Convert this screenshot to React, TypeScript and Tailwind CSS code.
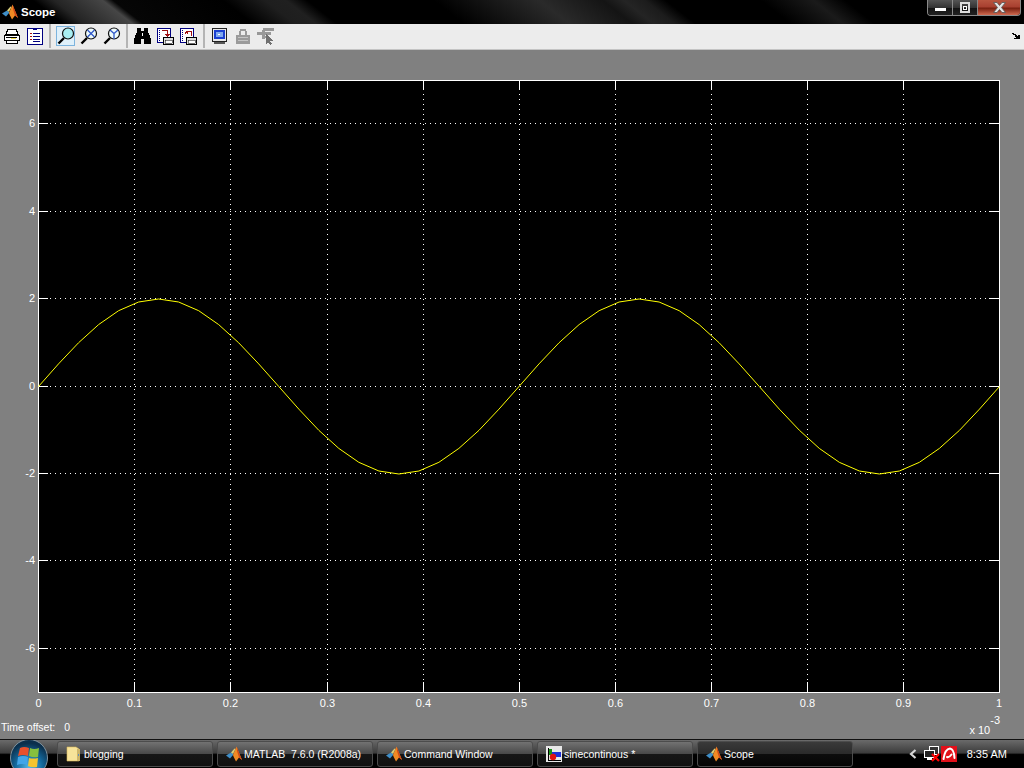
import React from 'react';

const font = { fontFamily: '"Liberation Sans", Arial, sans-serif' };

const MatlabLogo = ({ size = 16 }: { size?: number }) => (
  <svg width={size} height={size} viewBox="0 0 16 16">
    <path d="M0 9.5 L5 6.5 L7.5 8.5 L4 12.5 Z" fill="#3f8ec8" />
    <path d="M5 6.5 L7 8 L9.5 3 L8.5 2.5 Z" fill="#d8cf7a" />
    <path d="M7 9 L10.5 0.5 L16 14 L13 11.5 L10 15.5 L7.5 10.5 Z" fill="#f08a24" />
    <path d="M10.5 0.5 L16 14 L13 11.5 L11 5 Z" fill="#d0481a" />
  </svg>
);

const Printer = () => (
  <svg width="17" height="16" viewBox="0 0 17 16" shapeRendering="crispEdges">
    <path d="M5 1h8l2 5H3z" fill="#fff" stroke="#000" />
    <path d="M1 7h15v5H1z" fill="#fff" stroke="#000" />
    <path d="M3 9h11v1H3z" fill="#000" />
    <path d="M8 10h5v1H8z" fill="#f4e04d" />
    <path d="M3 12h11v3H3z" fill="#fff" stroke="#000" />
  </svg>
);

const ParamDoc = () => (
  <svg width="16" height="17" viewBox="0 0 16 17" shapeRendering="crispEdges">
    <path d="M0.5 0.5h15v16H0.5z" fill="#fff" stroke="#000080" />
    <path d="M6 0h4v2H6z" fill="#000080" />
    <path d="M3 5h2v1H3zM3 8h2v1H3zM3 11h2v1H3z" fill="#a01010" />
    <path d="M6 5h7v1H6zM6 8h7v1H6zM6 11h7v1H6zM6 13h7v1H6z" fill="#000080" />
  </svg>
);

const Magnifier = ({ kind }: { kind: 'plain' | 'x' | 'y' }) => (
  <svg width="18" height="18" viewBox="0 0 18 18">
    <line x1="1.5" y1="16.5" x2="7" y2="11" stroke="#000" strokeWidth="2.4" />
    <circle cx="11" cy="6.5" r="5.5" fill={kind === 'plain' ? '#a8eef2' : '#eefbfb'} stroke="#111" strokeWidth="1.2" />
    {kind === 'x' && <path d="M7.5 3 L14.5 10 M14.5 3 L7.5 10" stroke="#2f57c8" strokeWidth="1.3" />}
    {kind === 'y' && <path d="M11 6.5 L11 12 M11 6.5 L7 3 M11 6.5 L15 3" stroke="#2f57c8" strokeWidth="1.3" />}
  </svg>
);

const Binoculars = () => (
  <svg width="17" height="16" viewBox="0 0 17 16" shapeRendering="crispEdges">
    <path d="M3 0h4v3h3V0h4v5h1l2 7v4h-7v-5H7v5H0v-4l2-7h1z" fill="#000" />
    <path d="M8 5h1v3H8z" fill="#fff" />
  </svg>
);

const PageArrow = ({ flip }: { flip?: boolean }) => (
  <svg width="17" height="17" viewBox="0 0 17 17" shapeRendering="crispEdges">
    <path d="M0.5 0.5h13v14H0.5z" fill="#fff" stroke="#000080" />
    <path d="M2 2h1v1H2zM2 4h1v1H2zM2 6h1v1H2zM2 8h1v1H2zM2 10h1v1H2zM2 12h1v1H2z" fill="#000080" />
    {flip ? (
      <path d="M6 3h6v5h-1V4H8v2H7V5H6v1H5V4h1z" fill="#a01010" />
    ) : (
      <path d="M5 2h6v4h2v1h-1v1h-1v1h-1V8H9V7H8V6h2V3H5z" fill="#a01010" />
    )}
    <path d="M6.5 9.5h10v7h-10z" fill="#ddd" stroke="#000" />
    <path d="M8 12h7v3H8z" fill="#fff" stroke="#000" strokeWidth="0.5" />
  </svg>
);

const SimIcon = () => (
  <svg width="15" height="17" viewBox="0 0 15 17" shapeRendering="crispEdges">
    <path d="M0.5 0.5h14v13h-14z" fill="#e8e8e8" stroke="#222" />
    <path d="M2 2h11v9H2z" fill="#1a3fd0" />
    <path d="M4 4h7v5H4z" fill="#7fa8ee" />
    <path d="M6 6h2v1H6z" fill="#fff" />
    <path d="M2 14h11v2H2z" fill="#555" />
  </svg>
);

const LockIcon = () => (
  <svg width="14" height="16" viewBox="0 0 14 16" shapeRendering="crispEdges">
    <path d="M3 7V3h1V1h6v2h1v4H9V3H5v4z" fill="#9a9a9a" />
    <path d="M0 7h14v9H0z" fill="#9a9a9a" />
    <path d="M2 9h10v1H2zM2 12h10v1H2z" fill="#c4c4c4" />
  </svg>
);

const TreeArrow = () => (
  <svg width="17" height="17" viewBox="0 0 17 17" shapeRendering="crispEdges">
    <path d="M6 0h11v3H6zM0 4h14v3H0zM5 8h7v2H5zM5 2h3v9H5z" fill="#989898" />
    <path d="M9 6v10l2-2 2 3 2-1-2-3h3z" fill="#707070" />
  </svg>
);

const CornerArrow = () => (
  <svg width="8" height="6" viewBox="0 0 8 6" shapeRendering="crispEdges">
    <path d="M0 0h2v1h2v1h1v1h1V2h2v4H2V5h2V4H3V2H1V1H0z" fill="#000" />
  </svg>
);

const ToolSlot = ({ children, active }: { children: React.ReactNode; active?: boolean }) => (
  <div className="w-[23px] h-[24px] flex items-center justify-center">
    <div
      className={`w-[19px] h-[20px] flex items-center justify-center shrink-0 ${
        active ? 'bg-[#dff0fa] border border-[#7db4de]' : ''
      }`}
    >
      <span className="shrink-0 flex">{children}</span>
    </div>
  </div>
);

const ToolSep = () => (
  <div className="w-[8px] h-[24px] flex justify-center">
    <div className="w-[2px] h-full bg-[#b4b4b4]" />
  </div>
);

const xTicks = [0.1, 0.2, 0.3, 0.4, 0.5, 0.6, 0.7, 0.8, 0.9];
const xPx = [134, 230, 327, 423, 519, 615, 711, 807, 903];
const yTicks = [6, 4, 2, 0, -2, -4, -6];
const yPx = [123, 211, 298, 386, 473, 560, 648];

const sinePoints = Array.from({ length: 49 }, (_, i) => {
  const t = i / 48;
  const x = 38.5 + t * 961;
  const y = 386.5 - 87.5 * Math.sin(4 * Math.PI * t);
  return `${x.toFixed(1)},${y.toFixed(1)}`;
}).join(' ');

const ScopePlot = () => (
  <svg className="block shrink-0" width="1024" height="663" viewBox="0 50 1024 663" style={font}>
    <rect x="38.5" y="80.5" width="961" height="612" fill="#000" stroke="#fff" shapeRendering="crispEdges" />
    <g stroke="#fff" shapeRendering="crispEdges">
      {xPx.map((x) => (
        <g key={x}>
          <line x1={x + 0.5} y1="94" x2={x + 0.5} y2="680" strokeDasharray="1 4" />
          <line x1={x + 0.5} y1="80" x2={x + 0.5} y2="90" />
          <line x1={x + 0.5} y1="682" x2={x + 0.5} y2="692" />
        </g>
      ))}
      {yPx.map((y) => (
        <g key={y}>
          <line x1="50" y1={y + 0.5} x2="988" y2={y + 0.5} strokeDasharray="1 4" />
          <line x1="38" y1={y + 0.5} x2="48" y2={y + 0.5} />
          <line x1="989" y1={y + 0.5} x2="999" y2={y + 0.5} />
        </g>
      ))}
    </g>
    <polyline points={sinePoints} fill="none" stroke="#ffff00" strokeWidth="1" />
    <g fill="#fff" fontSize="11">
      {yTicks.map((v, i) => (
        <text key={v} x="35" y={yPx[i] + 4} textAnchor="end">
          {v}
        </text>
      ))}
      <text x="38.5" y="707" textAnchor="middle">0</text>
      {xTicks.map((v, i) => (
        <text key={v} x={xPx[i] + 0.5} y="707" textAnchor="middle">
          {v.toFixed(1)}
        </text>
      ))}
      <text x="999" y="707" textAnchor="middle">1</text>
    </g>
  </svg>
);

const TaskButton = ({ icon, label, active }: { icon: React.ReactNode; label: string; active?: boolean }) => (
  <div
    className={`w-[156px] h-[26px] flex items-center gap-[2px] pl-[7px] rounded-[3px] border border-[#4c4c4c] text-[10.5px] text-white ${
      active
        ? 'bg-[linear-gradient(#3a3a3a_0%,#2a2a2a_50%,#0c0c0c_52%,#050505_100%)]'
        : 'bg-[linear-gradient(#727272_0%,#4a4a4a_48%,#161616_52%,#111_100%)]'
    }`}
  >
    <span className="w-[17px] flex justify-center shrink-0">{icon}</span>
    <span className="whitespace-pre pt-[2px]">{label}</span>
  </div>
);

const FolderIcon = () => (
  <svg width="15" height="16" viewBox="0 0 15 16">
    <path d="M1 1h9l3 2v12H1z" fill="#f7e39a" stroke="#d8b858" strokeWidth="0.6" />
    <path d="M11 3h3v12h-3z" fill="#cdb56a" />
    <path d="M12 8h1v2h-1z" fill="#5c8fc4" />
  </svg>
);

const ModelIcon = () => (
  <svg width="16" height="16" viewBox="0 0 16 16" shapeRendering="crispEdges">
    <path d="M0 0h16v16H0z" fill="#e8e8e8" />
    <path d="M2 2h1v12h12v1H2z" fill="#000" />
    <path d="M3 3h3v6H3z" fill="#189018" />
    <path d="M6 6h9v5H6z" fill="#1c2fd8" />
    <circle cx="7" cy="11" r="3.2" fill="#e01010" shapeRendering="auto" />
  </svg>
);

const StartOrb = () => (
  <svg width="38" height="29" viewBox="0 0 38 29">
    <defs>
      <radialGradient id="orb" cx="50%" cy="75%" r="65%">
        <stop offset="0%" stopColor="#55b8e6" />
        <stop offset="55%" stopColor="#146a9e" />
        <stop offset="100%" stopColor="#0a2f4c" />
      </radialGradient>
    </defs>
    <circle cx="19" cy="18" r="18.5" fill="url(#orb)" stroke="#7f929e" />
    <path d="M10 8 Q14 6 19 8 L18 16 Q13 14 8 16 Z" fill="#e8502c" />
    <path d="M20 8 Q24 10 29 8 L28 17 Q23 18 19 16 Z" fill="#86c03e" />
    <path d="M8 17 Q13 15 18 17 L17 25 Q12 23 7 25 Z" fill="#42a5e8" />
    <path d="M19 18 Q23 19 28 18 L27 27 Q22 28 18 26 Z" fill="#f6c42e" />
  </svg>
);

const Chevron = () => (
  <svg width="8" height="10" viewBox="0 0 8 10">
    <path d="M6.5 1 L2 5 L6.5 9" fill="none" stroke="#d8d8d8" strokeWidth="2.2" />
  </svg>
);

const NetworkIcon = () => (
  <svg width="16" height="16" viewBox="0 0 16 16" shapeRendering="crispEdges">
    <path d="M5.5 0.5h9v8h-9z" fill="#333" stroke="#fff" />
    <path d="M0.5 4.5h10v7h-10z" fill="#222" stroke="#fff" />
    <path d="M3 12h5v2H3z" fill="#fff" />
    <path d="M8 8l7 7M15 8l-7 7" stroke="#f00" strokeWidth="2.2" shapeRendering="auto" />
  </svg>
);

const AviraIcon = () => (
  <svg width="16" height="16" viewBox="0 0 16 16">
    <rect width="16" height="16" fill="#e2101a" />
    <path d="M2.5 13 Q4 3 9 2.5 Q13 3 13.5 12 M6 11 Q8 12 10.5 8.5" fill="none" stroke="#fff" strokeWidth="2" strokeLinecap="round" />
  </svg>
);

const WindowClose = () => (
  <svg width="13" height="11" viewBox="0 0 13 11">
    <path d="M0.5 0.5h3.5l2.5 3 2.5-3h3.5l-4 5 4 5h-3.5l-2.5-3-2.5 3h-3.5l4-5z" fill="#e4e4e4" stroke="#555" strokeWidth="0.8" />
  </svg>
);

const App = () => (
  <div className="w-[1024px] h-[768px] flex flex-col overflow-hidden bg-[#808080]" style={font}>
    <div className="h-[24px] shrink-0 flex items-start justify-between bg-[linear-gradient(38deg,#000_6%,#242424_8%,#464646_12.6%,#060606_13.6%,#000_24%,#1e1e1e_28%,#202020_30%,#000_32%,#000_44%,#2a2a2a_54%,#141414_60%,#242424_62%,#1c1c1c_64%,#000_66%,#000_75%,#1a1a1a_80%,#000_83%,#000_100%)]">
      <div className="flex items-center h-[24px] pl-[2px] gap-[3px]">
        <MatlabLogo />
        <span className="text-[11.5px] font-bold text-white pt-[1px]">Scope</span>
      </div>
      <div className="flex mr-[3px] h-[16px] rounded-b-[4px] border border-t-0 border-[#8a8a8a] overflow-hidden">
        <div className="w-[25px] flex items-end justify-center pb-[4px] border-r border-[#8a8a8a] bg-[linear-gradient(#555_0%,#333_50%,#111_52%,#222_100%)]">
          <div className="w-[11px] h-[3px] bg-white" />
        </div>
        <div className="w-[25px] flex items-center justify-center border-r border-[#8a8a8a] bg-[linear-gradient(#555_0%,#333_50%,#111_52%,#222_100%)]">
          <div className="w-[10px] h-[11px] border-2 border-[#ddd] flex items-center justify-center">
            <div className="w-[4px] h-[4px] border border-white" />
          </div>
        </div>
        <div className="w-[42px] flex items-center justify-center bg-[linear-gradient(#b85540_0%,#a84030_45%,#7a2010_55%,#d06a50_100%)]">
          <WindowClose />
        </div>
      </div>
    </div>

    <div className="h-[26px] shrink-0 flex items-start pr-[4px] bg-[#ececec] border-b border-[#c4c4c4]">
      <ToolSlot><Printer /></ToolSlot>
      <ToolSlot><ParamDoc /></ToolSlot>
      <ToolSep />
      <ToolSlot active><Magnifier kind="plain" /></ToolSlot>
      <ToolSlot><Magnifier kind="x" /></ToolSlot>
      <ToolSlot><Magnifier kind="y" /></ToolSlot>
      <ToolSep />
      <ToolSlot><Binoculars /></ToolSlot>
      <ToolSlot><PageArrow /></ToolSlot>
      <ToolSlot><PageArrow flip /></ToolSlot>
      <ToolSep />
      <ToolSlot><SimIcon /></ToolSlot>
      <ToolSlot><LockIcon /></ToolSlot>
      <ToolSlot><TreeArrow /></ToolSlot>
      <div className="ml-auto mt-[9px]"><CornerArrow /></div>
    </div>

    <div className="flex-1 flex flex-col min-h-0">
      <ScopePlot />
      <div className="h-[26px] shrink-0 flex items-start justify-between pr-[24px] text-white text-[11px]">
        <div className="flex gap-[9px] pl-[1px] mt-[7px] text-[10.5px]">
          <span>Time offset:</span>
          <span>0</span>
        </div>
        <div className="flex items-start -mt-[1px]">
          <span className="mt-[10px]">x 10</span>
          <span>-3</span>
        </div>
      </div>
    </div>

    <div className="h-[29px] shrink-0 flex items-center border-t border-[#111] bg-[linear-gradient(#6a6a6a_0%,#3c3c3c_46%,#000_52%,#000_100%)]">
      <div className="w-[57px] h-full shrink-0 pl-[10px]">
        <StartOrb />
      </div>
      <div className="flex gap-[4px]">
        <TaskButton icon={<FolderIcon />} label="blogging" />
        <TaskButton icon={<MatlabLogo />} label="MATLAB  7.6.0 (R2008a)" />
        <TaskButton icon={<MatlabLogo />} label="Command Window" />
        <TaskButton icon={<ModelIcon />} label="sinecontinous *" />
        <TaskButton icon={<MatlabLogo />} label="Scope" active />
      </div>
      <div className="ml-auto flex items-center pr-[17px]">
        <span className="mr-[7px] flex"><Chevron /></span>
        <NetworkIcon />
        <span className="ml-[1px]"><AviraIcon /></span>
        <span className="ml-[10px] pt-[1px] text-[11px] text-white">8:35 AM</span>
      </div>
    </div>
  </div>
);

export default App;
